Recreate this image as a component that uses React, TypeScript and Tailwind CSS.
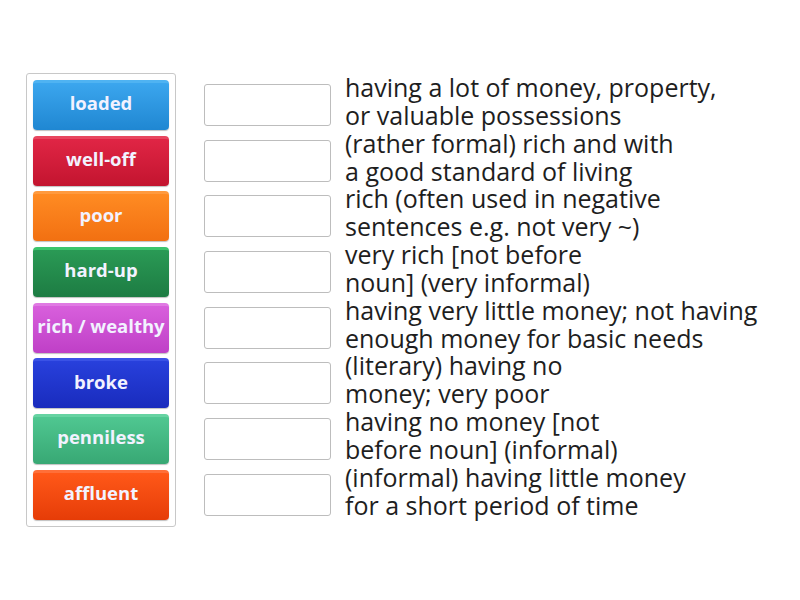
import React from "react";

const cards: { label: string; cls: string }[] = [
  { label: "loaded", cls: "bg-gradient-to-b from-[#3ba6ee] to-[#1f87d2] border-[#4fb3f2]" },
  { label: "well-off", cls: "bg-gradient-to-b from-[#e02545] to-[#c3142f] border-[#e8465f]" },
  { label: "poor", cls: "bg-gradient-to-b from-[#ff8b22] to-[#f27011] border-[#ff9a3e]" },
  { label: "hard-up", cls: "bg-gradient-to-b from-[#2a9a55] to-[#1d7c43] border-[#3cc56c]" },
  { label: "rich / wealthy", cls: "bg-gradient-to-b from-[#d85fdc] to-[#bf3fc7] border-[#e07ae3]" },
  { label: "broke", cls: "bg-gradient-to-b from-[#2840dc] to-[#192bbd] border-[#3a52e6]" },
  { label: "penniless", cls: "bg-gradient-to-b from-[#4fc791] to-[#38a874] border-[#66d3a2]" },
  { label: "affluent", cls: "bg-gradient-to-b from-[#ff5818] to-[#e63c07] border-[#ff6f38]" },
];

const defs: [string, string][] = [
  ["having a lot of money, property,", "or valuable possessions"],
  ["(rather formal) rich and with", "a good standard of living"],
  ["rich (often used in negative", "sentences e.g. not very ~)"],
  ["very rich [not before", "noun] (very informal)"],
  ["having very little money; not having", "enough money for basic needs"],
  ["(literary) having no", "money; very poor"],
  ["having no money [not", "before noun] (informal)"],
  ["(informal) having little money", "for a short period of time"],
];

export default function App() {
  return (
    <div
      className="w-[800px] h-[600px] bg-white"
      style={{ fontFamily: '"Open Sans", "Noto Sans", sans-serif' }}
    >
      <div className="flex items-start pt-[73px] pl-[26px]">
        <div className="w-[150px] border border-[#c8c8c8] rounded-[3px] p-[6px] flex flex-col gap-[5.7px]">
          {cards.map((c) => (
            <div
              key={c.label}
              className={`h-[50px] rounded-[4px] border-t-[3px] flex items-center justify-center text-[18.5px] font-bold text-[#f2f2ff] shadow-[0_1px_1px_rgba(0,0,0,0.25)] whitespace-nowrap ${c.cls}`}
            >
              <span className="-mt-[7px]">{c.label}</span>
            </div>
          ))}
        </div>
        <div className="ml-[28px] pt-[4.2px] flex flex-col">
          {defs.map((d, i) => (
            <div key={i} className="h-[55.7px] flex items-center">
              <div className="w-[127px] h-[42px] border border-[#bdbdbd] rounded-[3px] bg-white shrink-0" />
              <div className="ml-[14px] -mt-[8px] text-[25px] leading-[28px] text-[#1e1e1e] whitespace-nowrap">
                <div>{d[0]}</div>
                <div>{d[1]}</div>
              </div>
            </div>
          ))}
        </div>
      </div>
    </div>
  );
}
